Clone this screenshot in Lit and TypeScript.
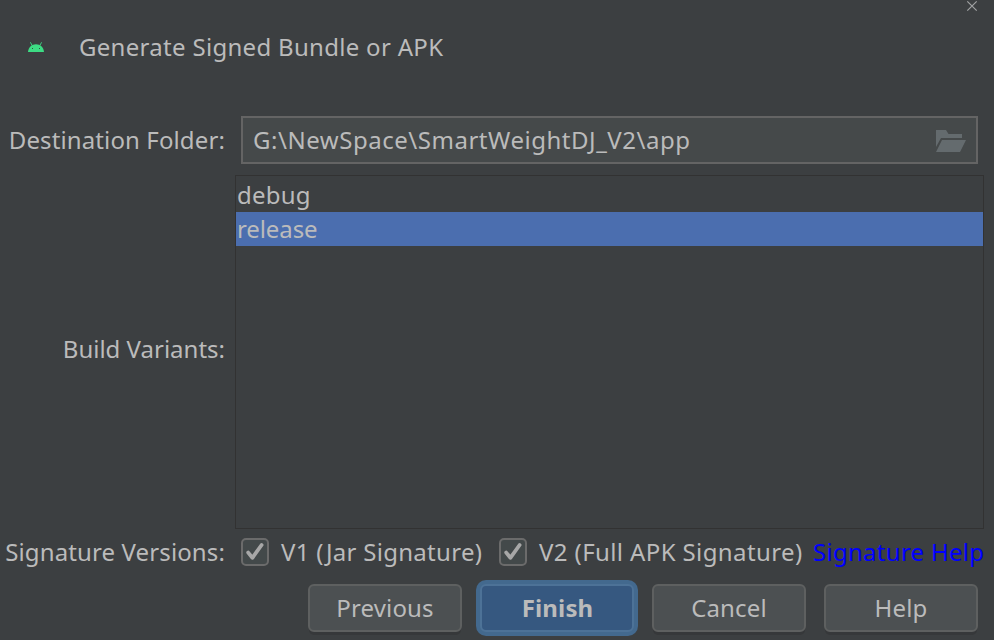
import { LitElement, html, css, svg } from "lit";
import { customElement, property } from "lit/decorators.js";

@customElement("check-box")
class CheckBox extends LitElement {
  static styles = css`
    :host { display: block; width: 28px; height: 28px; }
    svg { display: block; }
  `;
  render() {
    return html`<svg width="28" height="28" viewBox="0 0 28 28">
      <rect x="1" y="1" width="26" height="26" rx="4" fill="#43494a" stroke="#6b6b6b" stroke-width="2" />
      <path d="M7.2 14.6 L11.4 19.8 L20.6 7" fill="none" stroke="#a7a7a7" stroke-width="3.8" stroke-linecap="round" stroke-linejoin="round" />
    </svg>`;
  }
}

@customElement("dialog-button")
class DialogButton extends LitElement {
  @property() kind = "normal";
  static styles = css`
    :host { display: block; }
    .button {
      box-sizing: border-box; width: 154px; height: 48px; padding: 0;
      display: flex; align-items: center; justify-content: center;
      font: inherit; letter-spacing: inherit; color: #bbbbbb;
      background: #4c5052; border: 2px solid #5e6060; border-radius: 6px;
      box-shadow: 0 4px 0 -1px #36383a;
    }
    .primary {
      font-weight: 700; background: #365880;
      border-color: #4d7297; box-shadow: 0 0 0 4px #43698e;
      padding-left: 1px;
    }
  `;
  render() {
    return html`<button class="button ${this.kind}"><slot></slot></button>`;
  }
}

const android = svg`
  <path d="M0 10 C0.4 5.3 3.7 2.3 8 2.3 C12.3 2.3 15.6 5.3 16 10 Z" fill="#3ddc84" />
  <path d="M2.4 0.3 L4.3 3.8 M13.6 0.3 L11.7 3.8" stroke="#3ddc84" stroke-width="0.9" fill="none" />
  <rect x="4" y="6" width="1" height="1" fill="#33543f" />
  <rect x="11" y="6" width="1" height="1" fill="#33543f" />
`;

@customElement("app-root")
class AppRoot extends LitElement {
  static styles = css`
    :host {
      display: flex; flex-direction: column; box-sizing: border-box;
      width: 994px; height: 640px; overflow: hidden; position: relative;
      background: #3c3f41; color: #bbbbbb;
      font: 24px/34px "Noto Sans", "Open Sans", sans-serif;
      white-space: nowrap;
    }
    svg { display: block; flex: none; }
    .close { position: absolute; left: 966px; top: 0; }
    .header { display: flex; align-items: center; height: 94px; padding-left: 28px; gap: 35px; }
    .title { letter-spacing: 0.3px; }
    .form { display: grid; grid-template-columns: 225px 1fr; margin-top: 22px; }
    .label { justify-self: end; align-self: center; letter-spacing: 0.12px; }
    .field {
      box-sizing: border-box; height: 48px; margin: 0 16px;
      display: flex; align-items: center; justify-content: space-between;
      padding: 0 9px 0 10px; border: 2px solid #646464; background: #45494a;
    }
    .path { letter-spacing: 0.53px; }
    .folder { margin-top: 2px; }
    .list {
      box-sizing: border-box; height: 354px; margin: 11px 10px 0 10px;
      border: 1px solid #323232; padding-top: 2px;
    }
    .row { height: 34px; padding-left: 1px; letter-spacing: 0.2px; }
    .selected { background: #4b6eaf; letter-spacing: -0.1px; }
    .variants { margin-top: 5px; letter-spacing: 0; }
    .versions { display: flex; align-items: center; height: 46px; padding-left: 16px; }
    .v1 { width: 218px; margin-left: 12px; letter-spacing: 0.29px; }
    .v2 { width: 274px; margin-left: 12px; letter-spacing: 0.39px; }
    .link { color: #0000ff; letter-spacing: 0.28px; }
    .buttons {
      display: flex; justify-content: flex-end; gap: 18px;
      padding-right: 16px; margin-top: 9px; letter-spacing: 0.15px;
    }
  `;

  render() {
    return html`
      <svg class="close" width="12" height="12" viewBox="0 0 12 12">
        <path d="M1.3 1.3 L10.7 10.7 M10.7 1.3 L1.3 10.7" stroke="#a0a2a3" stroke-width="1.2" />
      </svg>
      <div class="header">
        <svg width="16" height="10" viewBox="0 0 16 10">${android}</svg>
        <span class="title">Generate Signed Bundle or APK</span>
      </div>
      <div class="form">
        <span class="label">Destination Folder:</span>
        <div class="field">
          <span class="path">G:\\NewSpace\\SmartWeightDJ_V2\\app</span>
          <svg class="folder" width="31" height="22" viewBox="0 0 31 22">
            <path d="M0 0 H10 L12.5 4 H26 V8 H5 L0 17 Z M6 10 H30 L24 22 H0 Z" fill="#646b6e" />
          </svg>
        </div>
        <span class="label variants">Build Variants:</span>
        <div class="list">
          <div class="row">debug</div>
          <div class="row selected">release</div>
        </div>
        <span class="label">Signature Versions:</span>
        <div class="versions">
          <check-box></check-box><span class="v1">V1 (Jar Signature)</span>
          <check-box></check-box><span class="v2">V2 (Full APK Signature)</span>
          <span class="link">Signature Help</span>
        </div>
      </div>
      <div class="buttons">
        <dialog-button>Previous</dialog-button>
        <dialog-button kind="primary">Finish</dialog-button>
        <dialog-button>Cancel</dialog-button>
        <dialog-button>Help</dialog-button>
      </div>
    `;
  }
}
